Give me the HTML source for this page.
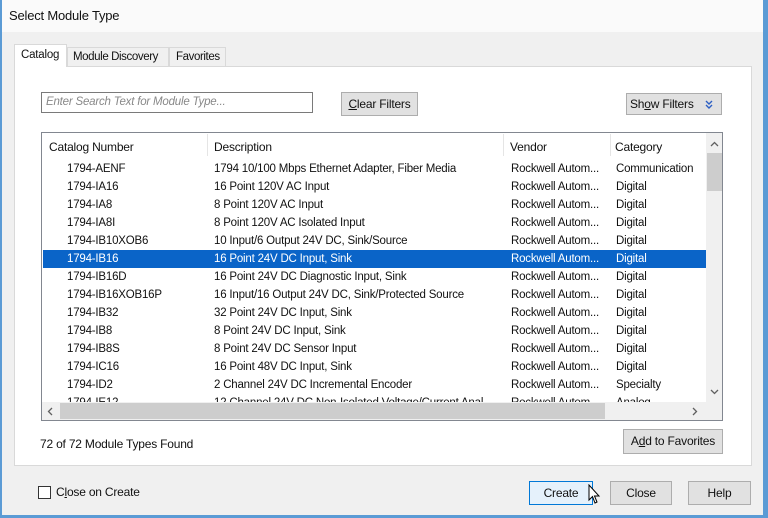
<!DOCTYPE html>
<html><head><style>
*{box-sizing:border-box;margin:0;padding:0}
body{width:768px;height:518px;background:#f0f0f0;font-family:"Liberation Sans",sans-serif;font-size:11.5px;color:#111;position:relative;overflow:hidden;letter-spacing:-0.2px}
.abs{position:absolute}
.btn{position:absolute;background:#e1e1e1;border:1px solid #adadad;text-align:center;font-size:12px;color:#111}
.row{position:absolute;left:1px;width:663px;height:18px;line-height:18px}
.row span{position:absolute;white-space:nowrap}
.sel{background:#0a64c8;color:#fff}
</style></head><body>
<div class="abs" style="left:0;top:0;width:768px;height:32px;background:#fafafa"></div>
<div class="abs" style="left:0;top:0;width:2px;height:518px;background:#5b9bd5"></div>
<div class="abs" style="left:763px;top:0;width:5px;height:518px;background:#5b9bd5"></div>
<div class="abs" style="left:0;top:515px;width:768px;height:3px;background:#5b9bd5"></div>
<div class="abs" style="left:9px;top:8px;font-size:13px">Select Module Type</div>
<!-- tabs -->
<div class="abs" style="left:14px;top:44px;width:53px;height:23px;background:#fff;border:1px solid #d9d9d9;border-bottom:none;z-index:2;padding:4px 0 0 6px;font-size:11.5px">Catalog</div>
<div class="abs" style="left:67px;top:47px;width:102px;height:20px;background:#f0f0f0;border:1px solid #d9d9d9;padding:3px 0 0 5px;font-size:11.5px;letter-spacing:-0.4px">Module Discovery</div>
<div class="abs" style="left:169px;top:47px;width:57px;height:20px;background:#f0f0f0;border:1px solid #d9d9d9;padding:3px 0 0 6px;font-size:11.5px;letter-spacing:-0.4px">Favorites</div>
<div class="abs" style="left:14px;top:66px;width:738px;height:400px;background:#fff;border:1px solid #d9d9d9"></div>
<!-- search -->
<div class="abs" style="left:41px;top:92px;width:272px;height:21px;border:1px solid #7a7a7a;background:#fff;padding:3px 0 0 4px;font-style:italic;color:#888">Enter Search Text for Module Type...</div>
<div class="btn" style="left:341px;top:92px;width:77px;height:24px;line-height:22px"><u>C</u>lear Filters</div>
<div class="btn" style="left:626px;top:93px;width:96px;height:22px;line-height:20px;text-align:left;padding-left:3px">Sh<u>o</u>w Filters
<svg style="position:absolute;left:78px;top:6px" width="8" height="9" viewBox="0 0 8 9"><path d="M1 1 L4 4 L7 1 M1 5 L4 8 L7 5" fill="none" stroke="#2c5fc4" stroke-width="1.4"/></svg></div>
<!-- list -->
<div class="abs" style="left:41px;top:132px;width:682px;height:289px;border:1px solid #828790;background:#fff;overflow:hidden">
 <div class="abs" style="left:7px;top:7px;font-size:12px">Catalog Number</div>
 <div class="abs" style="left:165px;top:1px;width:1px;height:22px;background:#e5e5e5"></div>
 <div class="abs" style="left:172px;top:7px;font-size:12px">Description</div>
 <div class="abs" style="left:461px;top:1px;width:1px;height:22px;background:#e5e5e5"></div>
 <div class="abs" style="left:468px;top:7px;font-size:12px">Vendor</div>
 <div class="abs" style="left:568px;top:1px;width:1px;height:22px;background:#e5e5e5"></div>
 <div class="abs" style="left:573px;top:7px;font-size:12px">Category</div>
 <div style="position:absolute;left:0;top:27px">
  <div class="row" style="top:0"><span style="left:24px">1794-AENF</span><span style="left:171px">1794 10/100 Mbps Ethernet Adapter, Fiber Media</span><span style="left:468px">Rockwell Autom...</span><span style="left:573px">Communication</span></div>
  <div class="row" style="top:18px"><span style="left:24px">1794-IA16</span><span style="left:171px">16 Point 120V AC Input</span><span style="left:468px">Rockwell Autom...</span><span style="left:573px">Digital</span></div>
  <div class="row" style="top:36px"><span style="left:24px">1794-IA8</span><span style="left:171px">8 Point 120V AC Input</span><span style="left:468px">Rockwell Autom...</span><span style="left:573px">Digital</span></div>
  <div class="row" style="top:54px"><span style="left:24px">1794-IA8I</span><span style="left:171px">8 Point 120V AC Isolated Input</span><span style="left:468px">Rockwell Autom...</span><span style="left:573px">Digital</span></div>
  <div class="row" style="top:72px"><span style="left:24px">1794-IB10XOB6</span><span style="left:171px">10 Input/6 Output 24V DC, Sink/Source</span><span style="left:468px">Rockwell Autom...</span><span style="left:573px">Digital</span></div>
  <div class="row sel" style="top:90px"><span style="left:24px">1794-IB16</span><span style="left:171px">16 Point 24V DC Input, Sink</span><span style="left:468px">Rockwell Autom...</span><span style="left:573px">Digital</span></div>
  <div class="row" style="top:108px"><span style="left:24px">1794-IB16D</span><span style="left:171px">16 Point 24V DC Diagnostic Input, Sink</span><span style="left:468px">Rockwell Autom...</span><span style="left:573px">Digital</span></div>
  <div class="row" style="top:126px"><span style="left:24px">1794-IB16XOB16P</span><span style="left:171px">16 Input/16 Output 24V DC, Sink/Protected Source</span><span style="left:468px">Rockwell Autom...</span><span style="left:573px">Digital</span></div>
  <div class="row" style="top:144px"><span style="left:24px">1794-IB32</span><span style="left:171px">32 Point 24V DC Input, Sink</span><span style="left:468px">Rockwell Autom...</span><span style="left:573px">Digital</span></div>
  <div class="row" style="top:162px"><span style="left:24px">1794-IB8</span><span style="left:171px">8 Point 24V DC Input, Sink</span><span style="left:468px">Rockwell Autom...</span><span style="left:573px">Digital</span></div>
  <div class="row" style="top:180px"><span style="left:24px">1794-IB8S</span><span style="left:171px">8 Point 24V DC Sensor Input</span><span style="left:468px">Rockwell Autom...</span><span style="left:573px">Digital</span></div>
  <div class="row" style="top:198px"><span style="left:24px">1794-IC16</span><span style="left:171px">16 Point 48V DC Input, Sink</span><span style="left:468px">Rockwell Autom...</span><span style="left:573px">Digital</span></div>
  <div class="row" style="top:216px"><span style="left:24px">1794-ID2</span><span style="left:171px">2 Channel 24V DC Incremental Encoder</span><span style="left:468px">Rockwell Autom...</span><span style="left:573px">Specialty</span></div>
  <div class="row" style="top:234px"><span style="left:24px">1794-IE12</span><span style="left:171px">12 Channel 24V DC Non-Isolated Voltage/Current Anal</span><span style="left:468px">Rockwell Autom...</span><span style="left:573px">Analog</span></div>
 </div>
 <!-- vscroll -->
 <div class="abs" style="left:664px;top:0;width:17px;height:269px;background:#f0f0f0"></div>
 <svg class="abs" style="left:668px;top:8px" width="9" height="6" viewBox="0 0 9 6"><path d="M1 5 L4.5 1.5 L8 5" fill="none" stroke="#606060" stroke-width="1.3"/></svg>
 <div class="abs" style="left:665px;top:20px;width:15px;height:38px;background:#cdcdcd"></div>
 <svg class="abs" style="left:668px;top:256px" width="9" height="6" viewBox="0 0 9 6"><path d="M1 1 L4.5 4.5 L8 1" fill="none" stroke="#606060" stroke-width="1.3"/></svg>
 <!-- hscroll -->
 <div class="abs" style="left:0;top:269px;width:681px;height:18px;background:#f0f0f0"></div>
 <div class="abs" style="left:18px;top:270px;width:545px;height:16px;background:#cdcdcd"></div>
 <svg class="abs" style="left:5px;top:274px" width="6" height="9" viewBox="0 0 6 9"><path d="M5 1 L1.5 4.5 L5 8" fill="none" stroke="#606060" stroke-width="1.3"/></svg>
 <svg class="abs" style="left:650px;top:274px" width="6" height="9" viewBox="0 0 6 9"><path d="M1 1 L4.5 4.5 L1 8" fill="none" stroke="#606060" stroke-width="1.3"/></svg>
 <div class="abs" style="left:664px;top:269px;width:17px;height:18px;background:#f0f0f0"></div>
</div>
<div class="abs" style="left:40px;top:437px;font-size:12px">72 of 72 Module Types Found</div>
<div class="btn" style="left:623px;top:429px;width:100px;height:25px;line-height:23px">A<u>d</u>d to Favorites</div>
<!-- bottom -->
<div class="abs" style="left:38px;top:486px;width:13px;height:13px;border:1px solid #333;background:#fff"></div>
<div class="abs" style="left:56px;top:485px;font-size:12px">C<u>l</u>ose on Create</div>
<div class="btn" style="left:529px;top:481px;width:64px;height:24px;line-height:22px;border-color:#0078d7;background:#e5f1fb">Create</div>
<div class="btn" style="left:610px;top:481px;width:62px;height:24px;line-height:22px">Close</div>
<div class="btn" style="left:688px;top:481px;width:63px;height:24px;line-height:22px">Help</div>
<svg class="abs" style="left:588px;top:484px" width="14" height="22" viewBox="0 0 14 22"><path d="M1 1 L1 16 L4.5 12.5 L7 19 L9 18 L6.5 12 L11 12 Z" fill="#fff" stroke="#000" stroke-width="1"/></svg>
</body></html>
